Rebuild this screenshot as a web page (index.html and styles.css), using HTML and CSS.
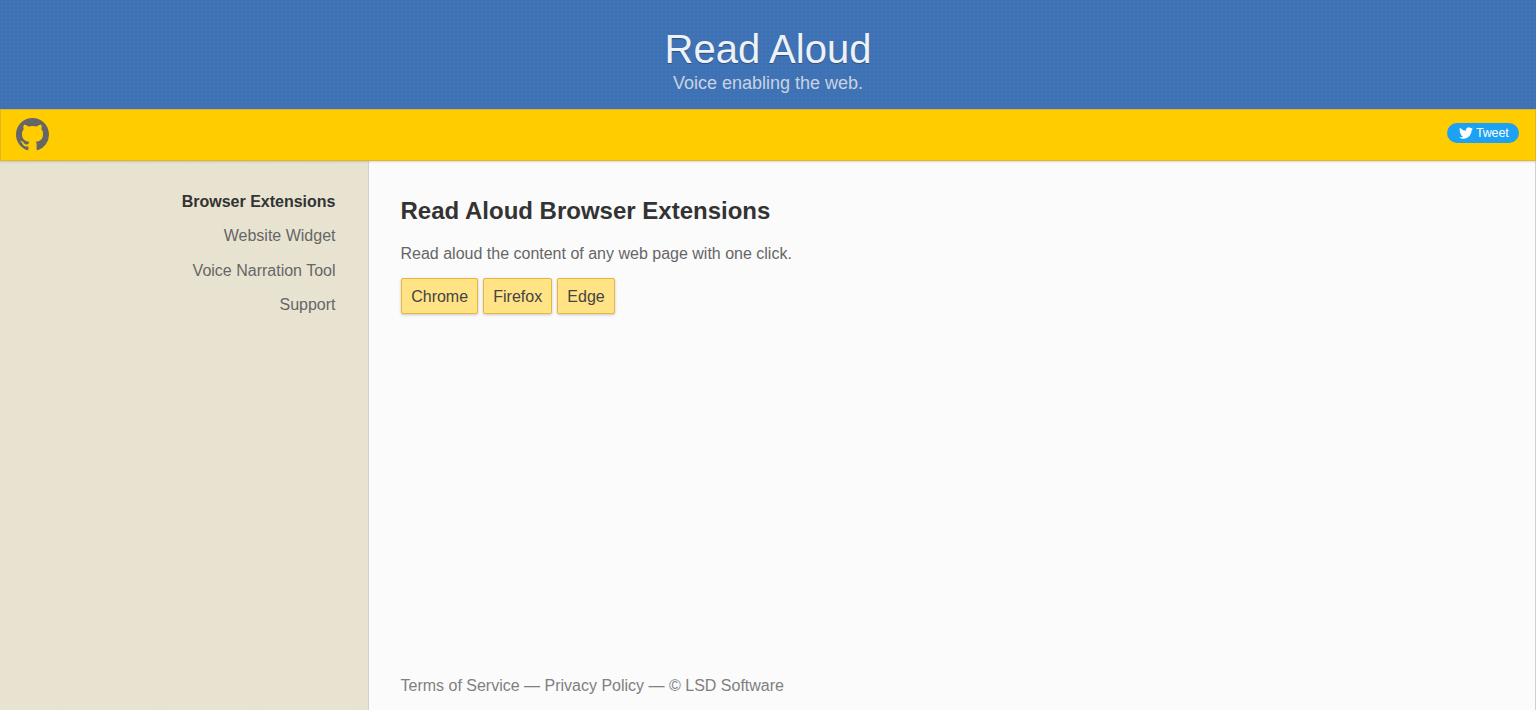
FILE: index.html
```html
<!DOCTYPE html>
<html lang="en">
<head>
<meta charset="utf-8">
<title>Read Aloud</title>
<link rel="stylesheet" href="styles.css">
</head>
<body>
<div class="page">
  <header class="masthead">
    <h1 class="title">Read Aloud</h1>
    <p class="tagline">Voice enabling the web.</p>
  </header>
  <div class="toolbar">
    <a class="github" href="#" aria-label="GitHub">
      <svg viewBox="0 0 16 16" width="33" height="33"><path fill="#666" d="M8 0C3.58 0 0 3.58 0 8c0 3.54 2.29 6.53 5.47 7.59.4.07.55-.17.55-.38 0-.19-.01-.82-.01-1.49-2.01.37-2.53-.49-2.69-.94-.09-.23-.48-.94-.82-1.13-.28-.15-.68-.52-.01-.53.63-.01 1.08.58 1.23.82.72 1.21 1.87.87 2.33.66.07-.52.28-.87.51-1.07-1.78-.2-3.64-.89-3.64-3.95 0-.87.31-1.59.82-2.15-.08-.2-.36-1.02.08-2.12 0 0 .67-.21 2.2.82.64-.18 1.32-.27 2-.27s1.36.09 2 .27c1.53-1.04 2.2-.82 2.2-.82.44 1.1.16 1.92.08 2.12.51.56.82 1.27.82 2.15 0 3.07-1.87 3.75-3.65 3.95.29.25.54.73.54 1.48 0 1.07-.01 1.93-.01 2.2 0 .21.15.46.55.38A8.01 8.01 0 0 0 16 8c0-4.42-3.58-8-8-8z"/></svg>
    </a>
    <a class="tweet" href="#">
      <svg viewBox="0 0 24 24" width="14" height="14"><path fill="#fff" d="M23.95 4.57a10 10 0 0 1-2.82.77 4.96 4.96 0 0 0 2.16-2.72c-.95.55-2 .95-3.12 1.18a4.92 4.92 0 0 0-8.38 4.48A13.98 13.98 0 0 1 1.64 3.16a4.82 4.82 0 0 0-.66 2.47c0 1.71.87 3.21 2.19 4.1a4.9 4.9 0 0 1-2.23-.62v.06a4.92 4.92 0 0 0 3.95 4.83 5 5 0 0 1-2.21.08 4.94 4.94 0 0 0 4.6 3.42A9.87 9.87 0 0 1 0 19.54a14 14 0 0 0 7.56 2.21c9.05 0 14-7.5 14-13.98 0-.21 0-.42-.02-.63a9.94 9.94 0 0 0 2.46-2.55z"/></svg>
      <span>Tweet</span>
    </a>
  </div>
  <div class="layout">
    <nav class="sidebar">
      <a class="nav-link active" href="#">Browser Extensions</a>
      <a class="nav-link" href="#">Website Widget</a>
      <a class="nav-link" href="#">Voice Narration Tool</a>
      <a class="nav-link" href="#">Support</a>
    </nav>
    <main class="content">
      <div class="article">
        <h2 class="heading">Read Aloud Browser Extensions</h2>
        <p class="lead">Read aloud the content of any web page with one click.</p>
        <div class="buttons">
          <a class="btn" href="#">Chrome</a>
          <a class="btn" href="#">Firefox</a>
          <a class="btn" href="#">Edge</a>
        </div>
      </div>
      <footer class="foot">Terms of Service — Privacy Policy — © LSD Software</footer>
    </main>
  </div>
</div>
</body>
</html>
```
FILE: styles.css
```css
* { box-sizing: border-box; }
html, body { margin: 0; height: 100%; overflow: hidden; }
body { font-family: "Liberation Sans", Arial, sans-serif; font-size: 16px; color: #666; background: #fbfbfb; }
a { text-decoration: none; color: inherit; }
.page { display: flex; flex-direction: column; height: 710px; }
.masthead {
  height: 109px; flex: none; text-align: center; padding-top: 26px;
  background-color: #3e72b5;
  background-image: radial-gradient(rgba(255,255,255,.018) 1px, transparent 1px);
  background-size: 4px 4px;
}
.title { margin: 0; font-size: 40px; line-height: 46px; font-weight: 400; color: #eef2f8; text-shadow: 0 1px 1px rgba(0,0,0,.3); }
.tagline { margin: 0; font-size: 18px; line-height: 22px; color: #c9d3e0; }
.toolbar {
  position: relative; z-index: 1;
  height: 52px; flex: none; display: flex; align-items: center; justify-content: space-between;
  padding: 0 16px 2px 15px; background: #ffcc00; border: 1px solid #e2b526;
  box-shadow: 0 1px 2px rgba(0,0,0,.14);
}
.github { display: flex; }
.tweet {
  display: flex; align-items: center; justify-content: center; gap: 2.5px; width: 72px; height: 20px;
  margin-bottom: 3px; padding-left: 2px; border-radius: 10px; background: #1da1f2; color: #fff; font-size: 12.5px; letter-spacing: -.15px;
}
.layout { flex: 1; display: flex; min-height: 0; }
.sidebar {
  width: 368px; flex: none; display: flex; flex-direction: column; align-items: flex-end;
  padding: 24px 32.5px 0 0;
  background-color: #e8e3d0;
  background-image: repeating-linear-gradient(135deg, rgba(255,255,255,.035) 0 2px, transparent 2px 5px);
}
.nav-link { line-height: 34.3px; }
.nav-link.active { font-weight: 700; color: #333; }
.content {
  flex: 1; display: flex; flex-direction: column; justify-content: space-between;
  padding: 35px 32px 14px 31.5px; background: #fbfbfb;
  border-left: 1px solid #d0d0d0; border-right: 1px solid #d0d0d0;
}
.heading { margin: 0; font-size: 24px; line-height: 29px; font-weight: 700; color: #333; }
.lead { margin: 19px 0 0; line-height: 20px; }
.buttons { display: flex; gap: 4.8px; margin: 14px 0 0 .5px; }
.btn {
  display: block; height: 36px; padding: 0 9.2px; line-height: 35px; color: #444;
  background: #ffe384; border: 1px solid #e6b73c; border-radius: 2px; box-shadow: 0 1px 3px rgba(0,0,0,.2);
}
.foot { line-height: 20px; color: #808080; }
```
